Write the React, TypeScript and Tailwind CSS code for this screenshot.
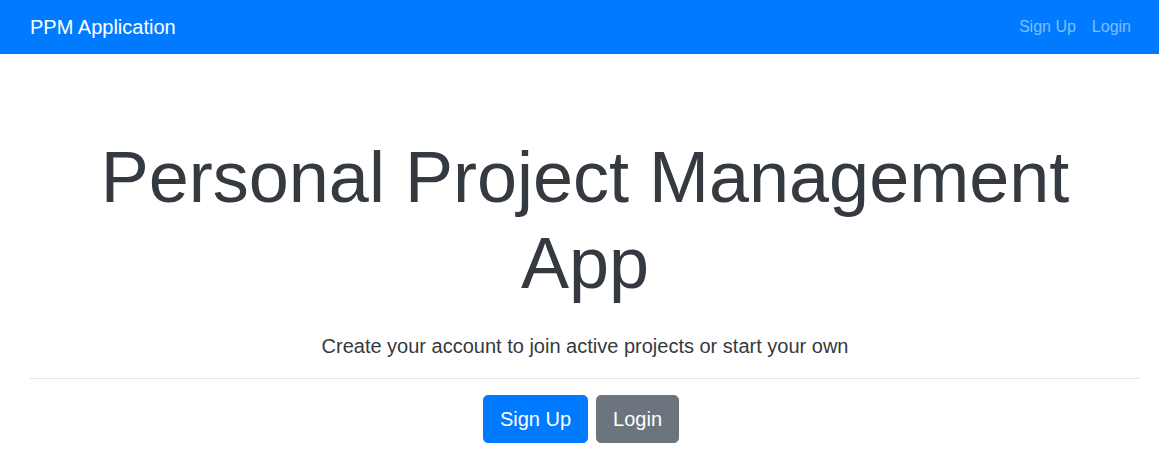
const navLinks = ["Sign Up", "Login"];

const Navbar = () => {
  return (
    <nav className="flex h-[54px] items-center justify-between bg-[#007bff] pl-[30px] pr-[20px]">
      <a className="text-[20px] leading-[30px] text-white" href="#">
        PPM Application
      </a>
      <ul className="flex">
        {navLinks.map((link) => (
          <li key={link}>
            <a className="block px-2 py-2 text-[16px] leading-6 text-white/50" href="#">
              {link}
            </a>
          </li>
        ))}
      </ul>
    </nav>
  );
};

export default function App() {
  return (
    <div className="min-h-screen bg-white font-['Liberation_Sans',Arial,sans-serif] text-[#212529]">
      <Navbar />
      <main className="pl-[30px] pr-[19px] pt-[80px] text-center">
        <h1 className="mb-6 text-[72px] font-light leading-[1.2] text-[#343a40]">
          Personal Project Management App
        </h1>
        <p className="text-[20px] font-light leading-[1.5] text-[#343a40]">
          Create your account to join active projects or start your own
        </p>
        <hr className="mb-4 mt-[17px] border-t border-black/10" />
        <div className="flex justify-center gap-2 pr-2">
          <a
            className="rounded-[4.8px] border border-[#007bff] bg-[#007bff] px-4 py-2 text-[20px] leading-[1.5] text-white"
            href="#">
            Sign Up
          </a>
          <a
            className="rounded-[4.8px] border border-[#6c757d] bg-[#6c757d] px-4 py-2 text-[20px] leading-[1.5] text-white"
            href="#">
            Login
          </a>
        </div>
      </main>
    </div>
  );
}
